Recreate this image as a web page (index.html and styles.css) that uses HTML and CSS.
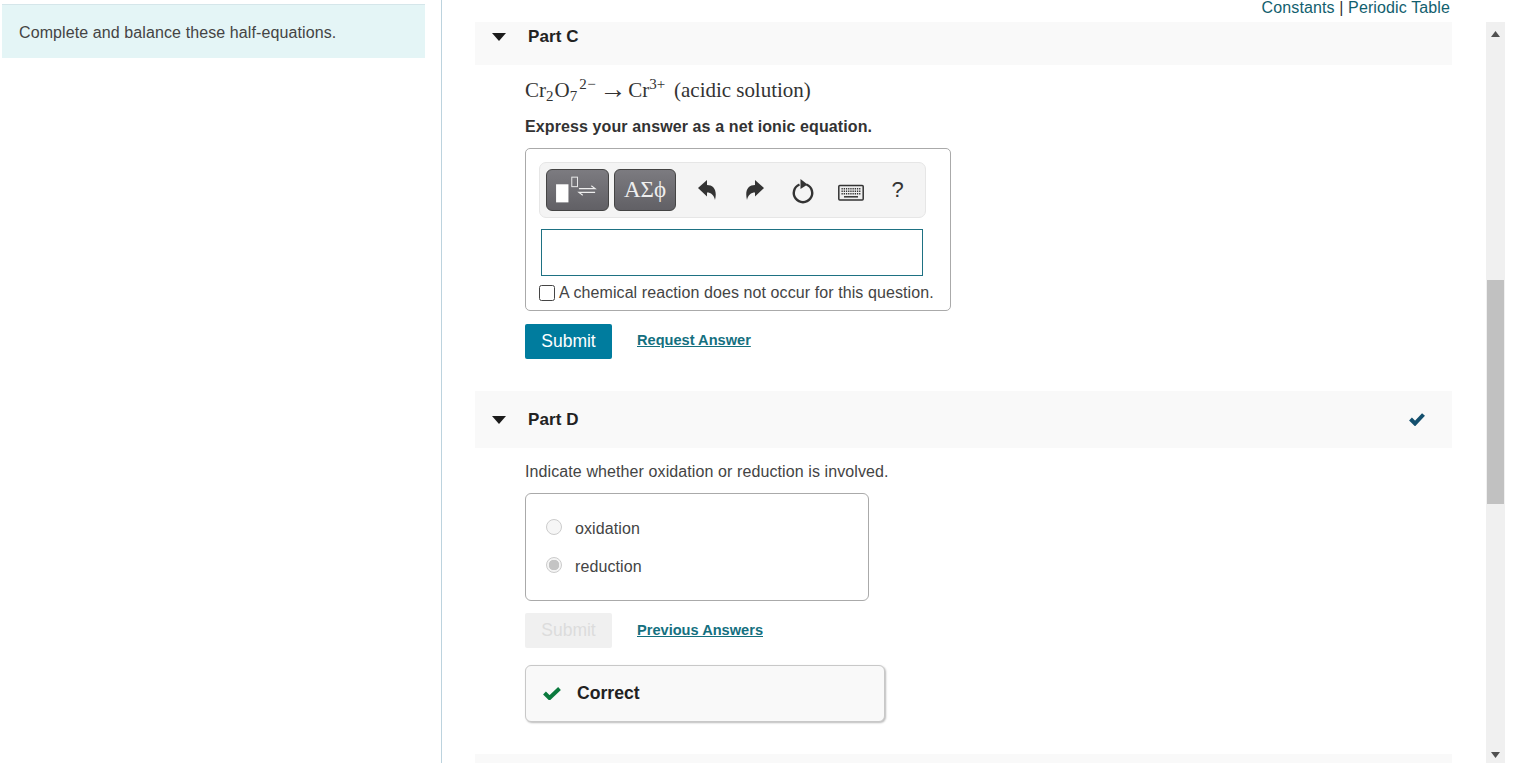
FILE: index.html
```html
<!DOCTYPE html>
<html lang="en">
<head>
<meta charset="utf-8">
<title>Half-equations</title>
<link rel="stylesheet" href="styles.css">
</head>
<body>
<div class="page">
  <aside class="side">
    <p class="intro">Complete and balance these half-equations.</p>
  </aside>
  <main class="main">
    <div class="toplinks"><a href="#">Constants</a> | <a href="#">Periodic Table</a></div>
    <section class="part">
      <header class="part-head part-head-c">
        <svg class="caret" viewBox="0 0 14 8" width="14" height="8"><path d="M0 0h14L7 8z"/></svg>
        <h2>Part C</h2>
      </header>
      <div class="part-body">
        <p class="equation"><span class="chem">Cr<sub>2</sub><span class="oxy">O</span><sub>7</sub><sup class="sup-wide">2−</sup></span><span class="arrow">→</span><span class="chem">Cr<sup>3+</sup></span><span class="cond">(acidic solution)</span></p>
        <p class="instr">Express your answer as a net ionic equation.</p>
        <div class="answer">
          <div class="toolbar">
            <button class="tbtn tbtn-a" type="button" aria-label="Templates">
              <svg viewBox="0 0 63 42" width="61" height="40"><rect x="9" y="15" width="13" height="19" fill="#fff"/><rect x="25.5" y="7.5" width="6" height="10" fill="none" stroke="#eee"/><path d="M33 19.500h17l-4-3M50 23.500H33l4 3" fill="none" stroke="#eee" stroke-width="1.200"/></svg>
            </button>
            <button class="tbtn tbtn-b" type="button">ΑΣϕ</button>
            <span class="ticon ticon-undo"><svg viewBox="0 0 20 22" width="20" height="22"><path d="M1 9L10 1V6C16.500 6 20.500 11 18 21 17 16 14 13.500 10 13.500V17.500Z" fill="#333"/></svg></span>
            <span class="ticon ticon-redo"><svg viewBox="0 0 20 22" width="20" height="22"><path d="M19 9L10 1V6C3.500 6-.5 11 2 21 3 16 6 13.500 10 13.500V17.500Z" fill="#333"/></svg></span>
            <span class="ticon ticon-reset"><svg viewBox="0 0 24 26" width="24" height="26"><path d="M8.500 6.500A9.200 9.200 0 1 0 15.500 6.500" fill="none" stroke="#333" stroke-width="2.400"/><path d="M9.500 1l7 5.500-7 4.500z" fill="#333"/></svg></span>
            <span class="ticon ticon-kbd"><svg viewBox="0 0 26 17" width="26" height="17"><rect x=".8" y="1.500" width="24.400" height="14.500" rx="1" fill="#eee" stroke="#333" stroke-width="1.500"/><path d="M3.500 4.800h19M3.500 7.300h19M3.500 9.800h19" stroke="#333" stroke-width="1.400" stroke-dasharray="1.300 .9"/><path d="M6 12.800h14" stroke="#333" stroke-width="1.500"/></svg></span>
            <span class="ticon ticon-help">?</span>
          </div>
          <div class="eq-input"></div>
          <label class="noreact"><span class="checkbox"></span>A chemical reaction does not occur for this question.</label>
        </div>
        <div class="actions">
          <button class="submit" type="button">Submit</button>
          <a class="action-link" href="#">Request Answer</a>
        </div>
      </div>
    </section>
    <section class="part part-d">
      <header class="part-head part-head-d">
        <svg class="caret" viewBox="0 0 14 8" width="14" height="8"><path d="M0 0h14L7 8z"/></svg>
        <h2>Part D</h2>
        <svg class="done" viewBox="0 0 16 14" width="16" height="14"><path d="M1.500 7L6 11.500 14.500 2.500" fill="none" stroke="#14506e" stroke-width="4"/></svg>
      </header>
      <div class="part-body">
        <p class="prompt">Indicate whether oxidation or reduction is involved.</p>
        <div class="choices">
          <div class="choice"><span class="radio"></span>oxidation</div>
          <div class="choice"><span class="radio radio-on"></span>reduction</div>
        </div>
        <div class="actions actions-d">
          <button class="submit submit-off" type="button" disabled>Submit</button>
          <a class="action-link" href="#">Previous Answers</a>
        </div>
        <div class="feedback">
          <svg viewBox="0 0 18 14" width="18" height="14"><path d="M1.500 7L6.500 12 16.500 2.500" fill="none" stroke="#0b7a3e" stroke-width="4"/></svg>
          <strong>Correct</strong>
        </div>
      </div>
    </section>
    <div class="part-next"></div>
  </main>
  <div class="scrollbar">
    <svg class="sb-up" viewBox="0 0 9 6" width="9" height="6"><path d="M0 6h9L4.500 0z"/></svg>
    <div class="sb-thumb"></div>
    <svg class="sb-down" viewBox="0 0 9 6" width="9" height="6"><path d="M0 0h9L4.500 6z"/></svg>
  </div>
</div>
</body>
</html>
```
FILE: styles.css
```css
* { box-sizing: border-box; }
html, body { margin: 0; height: 763px; overflow: hidden; background: #fff; }
body { font-family: "Liberation Sans", Arial, sans-serif; font-size: 16px; color: #333; }
p, h2 { margin: 0; }

.page { display: flex; height: 763px; }

.side { width: 442px; flex: none; border-right: 1px solid #bcd3de; padding: 4px 16px 0 2px; }
.intro { height: 54px; background: #e4f5f6; border-top: 1px solid #d5e6ea; padding: 2px 17px 0; line-height: 52px; color: #444; font-size: 16px; letter-spacing: .1px; }

.main { width: 977px; flex: none; margin-left: 33px; height: 763px; overflow: hidden; }
.toplinks { height: 22px; padding-right: 2px; text-align: right; line-height: 16px; color: #333; letter-spacing: .12px; }
.toplinks a { color: #12606e; text-decoration: none; }

.part-head { display: flex; align-items: center; background: #f9f9f9; padding-left: 17px; }
.part-head-c { height: 43px; padding-bottom: 14px; }
.part-head-d { height: 57px; }
.part-head h2 { font-size: 17px; font-weight: 700; color: #222; margin-left: 22px; letter-spacing: .1px; }
.caret { fill: #1c1c1c; flex: none; margin-top: 1px; }
.done { margin-left: auto; margin-right: 27px; margin-top: -2px; }

.part-body { padding-left: 50px; }

.equation { height: 41px; padding-top: 11px; font-family: "Liberation Serif", "Times New Roman", serif; font-size: 21px; line-height: 29px; color: #333; white-space: nowrap; display: flex; }
.equation sub { font-size: 15px; line-height: 0; vertical-align: -4px; }
.equation sup { font-size: 15px; line-height: 0; vertical-align: 8px; }
.oxy { margin-left: 1px; }
.sup-wide { margin-left: 2px; letter-spacing: .5px; }
.arrow { margin: 0 2px 0 3px; font-size: 27px; line-height: 27px; }
.cond { margin-left: 9px; letter-spacing: -.03px; }

.instr { height: 42px; padding-top: 12px; font-weight: 700; line-height: 18px; letter-spacing: .11px; color: #333; }

.answer { width: 426px; height: 163px; border: 1px solid #aaa; border-radius: 5px; padding: 13px 0 0 13px; }
.toolbar { width: 387px; height: 56px; background: #f4f4f4; border: 1px solid #e6e6e6; border-radius: 7px; padding: 6px; display: flex; align-items: center; }
.tbtn { height: 42px; border: 1px solid #444; border-radius: 6px; padding: 0; margin: 0; background: linear-gradient(#7c7b80, #616065); color: #eee; }
.tbtn-a { width: 63px; }
.tbtn-a svg { display: block; }
.tbtn-b { width: 62px; margin-left: 5px; font-family: "Liberation Serif", "DejaVu Serif", serif; font-size: 23px; }
.ticon { display: flex; align-items: center; justify-content: center; height: 42px; }
.ticon-undo { margin-left: 21px; }
.ticon-redo { margin-left: 28px; }
.ticon-reset { margin-left: 26px; padding-top: 2px; }
.ticon-kbd { margin-left: 23px; padding-top: 4px; }
.ticon-help { margin-left: 28px; font-size: 22px; color: #333; width: 11px; }

.eq-input { width: 382px; height: 47px; margin: 11px 0 0 2px; background: #fff; border: 1px solid #1e7183; }
.noreact { display: flex; align-items: center; height: 20px; margin-top: 7px; color: #444; letter-spacing: .09px; white-space: nowrap; }
.checkbox { width: 16px; height: 16px; flex: none; margin-right: 4px; background: #fff; border: 1px solid #444; border-radius: 2.500px; }

.actions { display: flex; align-items: center; margin-top: 13px; height: 35px; }
.submit { width: 87px; height: 35px; border: 0; border-radius: 2px; padding: 0; background: #007c9e; color: #fff; font-family: inherit; font-size: 17.500px; }
.submit-off { background: #f0f0f0; color: #dcdcdc; }
.action-link { margin-left: 25px; margin-top: -4px; font-size: 14.600px; font-weight: 700; color: #14707f; }
.actions-d .action-link { margin-top: -2px; }

.part-d { margin-top: 32px; }
.prompt { height: 45px; padding-top: 14px; line-height: 19px; color: #444; letter-spacing: .1px; }
.choices { width: 344px; height: 108px; border: 1px solid #aaa; border-radius: 6px; padding-top: 16px; }
.choice { display: flex; align-items: center; height: 38px; padding-left: 20px; color: #444; letter-spacing: .1px; }
.radio { width: 16px; height: 16px; margin-right: 13px; border: 1px solid #ccc; border-radius: 50%; background: #f6f6f6; flex: none; margin-top: -5px; }
.radio-on { background: radial-gradient(circle, #c4c4c4 0 5px, #f4f4f4 5.500px); }
.actions-d { margin-top: 12px; }
.feedback { display: flex; align-items: center; width: 360px; height: 57px; margin-top: 17px; padding-left: 17px; background: #f9f9f9; border: 1px solid #c8c8c8; border-radius: 6px; box-shadow: 1px 1px 2px #bbb; }
.feedback svg { margin-top: -2px; }
.feedback strong { margin-left: 16px; font-size: 17.600px; color: #222; }

.part-next { height: 9px; margin-top: 32px; background: #f9f9f9; }

.scrollbar { width: 19px; height: 741px; margin: 22px 0 0 34px; background: #f0f0f0; flex: none; display: flex; flex-direction: column; align-items: center; padding: 9px 0 5px; }
.scrollbar svg { fill: #505050; flex: none; }
.sb-thumb { width: 17px; height: 224px; margin-top: 243px; background: #c1c1c1; }
.sb-down { margin-top: auto; }
```
